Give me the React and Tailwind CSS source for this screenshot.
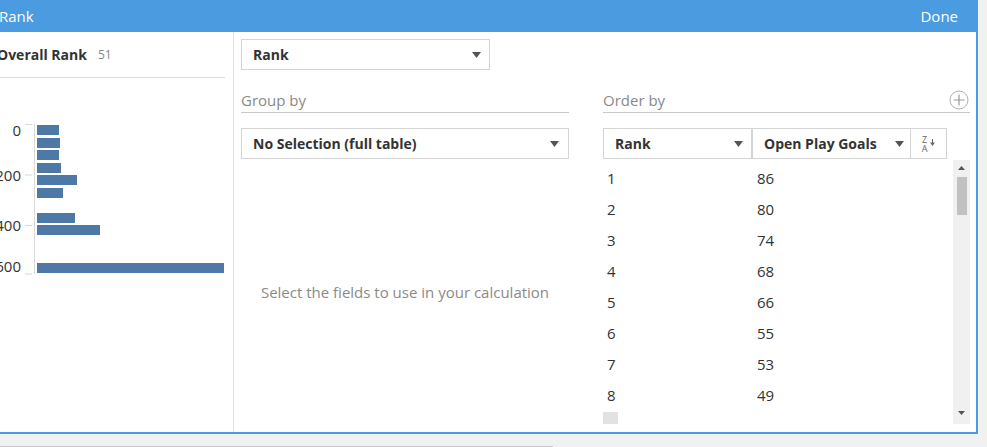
import React from 'react';

const bars = [
  { y: 124, w: 22 },
  { y: 137, w: 23 },
  { y: 149, w: 22 },
  { y: 162, w: 24 },
  { y: 174, w: 40 },
  { y: 187, w: 26 },
  { y: 212, w: 38 },
  { y: 224, w: 63 },
  { y: 262, w: 187 },
];

const ticks = [
  { y: 123.5, label: '0', ty: 135 },
  { y: 174, label: '200', ty: 180 },
  { y: 224.5, label: '400', ty: 230 },
  { y: 273, label: '600', ty: 271 },
];

const rows = [
  [1, 86],
  [2, 80],
  [3, 74],
  [4, 68],
  [5, 66],
  [6, 55],
  [7, 53],
  [8, 49],
];

const Caret = ({ className = '' }) => (
  <svg width="9" height="6" viewBox="0 0 9 6" className={className}>
    <path d="M0 0 L9 0 L4.5 6 Z" fill="#555" />
  </svg>
);

const Dropdown = ({ label, className = '' }) => (
  <div className={`h-[31px] border border-[#d4d4d4] flex items-center justify-between pl-[11px] pr-[8px] ${className}`}>
    <span className="font-bold text-[14px] text-[#333]">{label}</span>
    <Caret />
  </div>
);

const Chart = () => (
  <svg width="226" height="170" viewBox="0 110 226 170" className="mt-[33px]">
    <line x1="34.5" y1="123" x2="34.5" y2="273" stroke="#d9d9d9" strokeWidth="1" />
    {ticks.map(t => (
      <g key={t.label}>
        <line x1="25" y1={t.y} x2="32" y2={t.y} stroke="#d9d9d9" strokeWidth="1" />
        <text x="21" y={t.ty} textAnchor="end" fontSize="15" fill="#333" fontFamily="'Open Sans', sans-serif">
          {t.label}
        </text>
      </g>
    ))}
    {bars.map((b, i) => (
      <rect key={i} x="37" y={b.y} width={b.w} height="10" fill="#4e79a7" />
    ))}
  </svg>
);

const App = () => {
  return (
    <div
      className="w-[987px] h-[447px] bg-[#f1f1f1] flex flex-col overflow-hidden text-[#333]"
      style={{ fontFamily: '"Open Sans", Lato, sans-serif' }}
    >
      <div className="w-[978px] h-[434px] bg-white border-r-2 border-b-2 border-[#4a9be0] flex flex-col">
        {/* title bar */}
        <div className="h-[32px] bg-[#4a9be0] flex items-center justify-between pr-[18px] text-white text-[15px]">
          <span className="-ml-[1px]">Rank</span>
          <span>Done</span>
        </div>

        <div className="flex flex-1 min-h-0">
          {/* left: field preview */}
          <div className="w-[234px] border-r border-[#e3e3e3] flex flex-col">
            <div className="h-[46px] mr-[8px] border-b border-[#dcdcdc] flex items-center">
              <span className="-ml-[3px] font-bold text-[14px]">Overall Rank</span>
              <span className="ml-[11px] text-[12px] text-[#8a8a8a]">51</span>
            </div>
            <Chart />
          </div>

          {/* right: calculation setup */}
          <div className="flex-1 pl-[7px] pr-[6px] flex flex-col">
            <Dropdown label="Rank" className="mt-[7px] w-[249px]" />

            <div className="flex flex-1 gap-[34px] mt-[19px]">
              <div className="w-[328px] flex flex-col">
                <div className="h-[24px] border-b border-[#c8c8c8] flex items-center text-[15px] text-[#8a8a8a]">
                  Group by
                </div>
                <Dropdown label="No Selection (full table)" className="mt-[15px] pr-[9px]" />
                <div className="flex-1 flex items-center justify-center pb-[6px] text-[15px] text-[#8a8a8a]">
                  Select the fields to use in your calculation
                </div>
              </div>

              <div className="w-[367px] flex flex-col">
                <div className="h-[24px] border-b border-[#c8c8c8] flex items-center justify-between text-[15px] text-[#8a8a8a]">
                  <span>Order by</span>
                  <svg width="20" height="20" viewBox="0 0 20 20" className="-mt-[2px] mr-[1px]">
                    <circle cx="10" cy="10" r="9" fill="none" stroke="#b0b0b0" strokeWidth="1" />
                    <path d="M10 4.5 V15.5 M4.5 10 H15.5" stroke="#999" strokeWidth="1.2" />
                  </svg>
                </div>

                <div className="mt-[15px] w-[344px] h-[31px] flex border border-[#d4d4d4]">
                  <div className="w-[149px] border-r-2 border-[#d4d4d4] flex items-center justify-between pl-[11px] pr-[8px]">
                    <span className="font-bold text-[14px]">Rank</span>
                    <Caret />
                  </div>
                  <div className="w-[158px] border-r border-[#d4d4d4] flex items-center justify-between pl-[11px] pr-[6px]">
                    <span className="font-bold text-[14px] whitespace-nowrap">Open Play Goals</span>
                    <Caret />
                  </div>
                  <div className="flex-1 flex items-center justify-center gap-[3px] text-[#666]">
                    <div className="flex flex-col items-center leading-[9px] text-[9px]">
                      <span>Z</span>
                      <span>A</span>
                    </div>
                    <svg width="5" height="7" viewBox="0 0 5 7" className="-mt-[2px]">
                      <path d="M2.5 0 V5" stroke="#666" strokeWidth="1" />
                      <path d="M0 3.5 L5 3.5 L2.5 7 Z" fill="#666" />
                    </svg>
                  </div>
                </div>

                <div className="flex h-[265px] overflow-hidden">
                  <div className="w-[350px] pt-[4px] text-[15px]">
                    {rows.map(([r, v]) => (
                      <div key={r} className="h-[31px] flex items-center">
                        <span className="w-[149px] pl-[4px]">{r}</span>
                        <span className="pl-[5px]">{v}</span>
                      </div>
                    ))}
                    <div className="h-[31px] flex items-start">
                      <span className="w-[149px]">
                        <span className="block mt-[1px] w-[15px] h-[28px] bg-[#e2e2e2] pl-[4px] pt-[5px]">9</span>
                      </span>
                      <span className="pl-[5px] pt-[6px]">48</span>
                    </div>
                  </div>
                  <div className="w-[17px] mt-[1px] bg-[#f0f0f0] flex flex-col items-center">
                    <svg width="7" height="4" viewBox="0 0 7 4" className="mt-[6px]">
                      <path d="M0 4 L7 4 L3.5 0 Z" fill="#555" />
                    </svg>
                    <div className="mt-[7px] w-[10px] h-[38px] bg-[#c1c1c1]" />
                    <div className="flex-1" />
                    <svg width="7" height="4" viewBox="0 0 7 4" className="mb-[9px]">
                      <path d="M0 0 L7 0 L3.5 4 Z" fill="#555" />
                    </svg>
                  </div>
                </div>
              </div>
            </div>
          </div>
        </div>
      </div>
      <div className="flex-1 flex flex-col justify-end">
        <div className="w-[553px] h-px bg-[#c6c6c6]" />
      </div>
    </div>
  );
};

export default App;
